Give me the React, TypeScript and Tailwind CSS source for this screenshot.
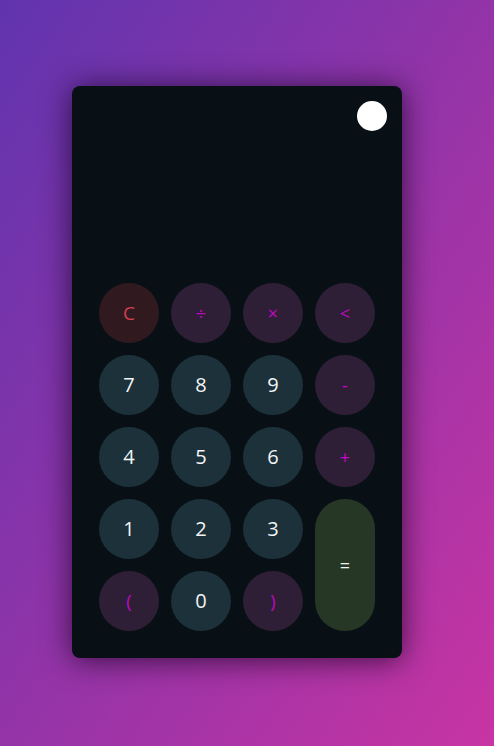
import React from "react";

type K = { l: string; t: "num" | "op" | "clr" | "eq" };

const keys: K[] = [
  { l: "C", t: "clr" },
  { l: "÷", t: "op" },
  { l: "×", t: "op" },
  { l: "<", t: "op" },
  { l: "7", t: "num" },
  { l: "8", t: "num" },
  { l: "9", t: "num" },
  { l: "-", t: "op" },
  { l: "4", t: "num" },
  { l: "5", t: "num" },
  { l: "6", t: "num" },
  { l: "+", t: "op" },
  { l: "1", t: "num" },
  { l: "2", t: "num" },
  { l: "3", t: "num" },
  { l: "=", t: "eq" },
  { l: "(", t: "op" },
  { l: "0", t: "num" },
  { l: ")", t: "op" },
];

function cls(t: K["t"]) {
  switch (t) {
    case "num":
      return "bg-[#1c313a] text-[#f2f4f5] text-[20px] rounded-full h-[60px]";
    case "op":
      return "bg-[#2e1f37] text-[#c107c4] text-[18px] rounded-full h-[60px]";
    case "clr":
      return "bg-[#311a1f] text-[#d0404f] text-[19px] rounded-full h-[60px]";
    case "eq":
      return "bg-[#263726] text-[#f2f4f5] text-[18px] rounded-full row-span-2 h-[132px]";
  }
}

export default function App() {
  return (
    <div
      className="min-h-screen w-full flex items-center justify-center pr-[20px] pb-[2px] bg-[linear-gradient(to_bottom_right,#6034ae_0%,#9334a8_50%,#c834a3_100%)]"
      style={{ fontFamily: '"Open Sans", "Noto Sans", sans-serif' }}
    >
      <div className="w-[330px] h-[572px] bg-[#081016] rounded-[8px] shadow-[0_2px_30px_rgba(20,0,30,0.75)] flex flex-col px-[27px] pb-[27px] pt-[15px]">
        <div className="flex justify-end -mr-[12px]">
          <div className="w-[30px] h-[30px] rounded-full bg-white" />
        </div>
        <div className="flex-1" />
        <div className="grid grid-cols-[repeat(4,60px)] gap-[12px]">
          {keys.map((k, i) => (
            <button
              key={i}
              className={`${cls(k.t)} w-[60px] flex items-center justify-center leading-none`}
            >
              {k.l}
            </button>
          ))}
        </div>
      </div>
    </div>
  );
}
